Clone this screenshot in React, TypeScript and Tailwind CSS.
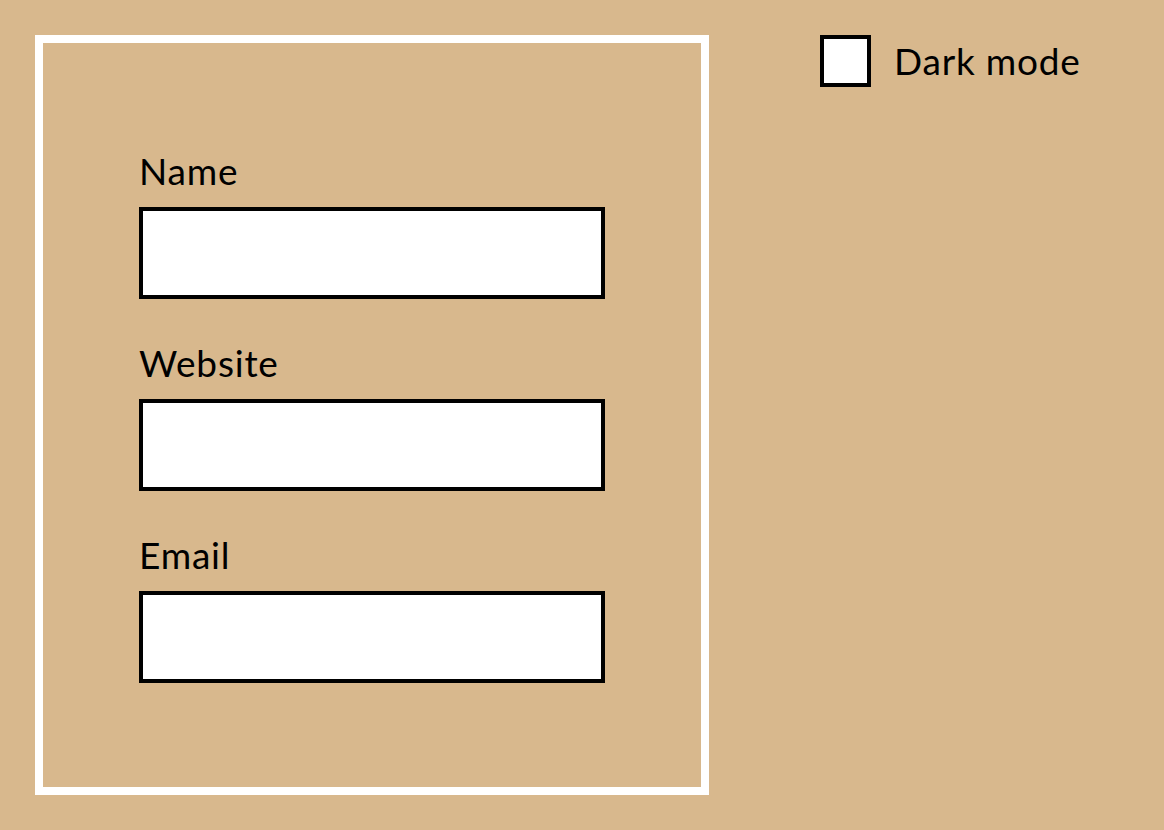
import React, { useState } from 'react';

const fields = ['Name', 'Website', 'Email'];

export default function App() {
  const [dark, setDark] = useState(false);

  return (
    <div
      className="flex h-[830px] w-full gap-[111px] bg-[#d8b88d] p-[35px] text-black"
      style={{ fontFamily: 'Lato, "Open Sans", sans-serif' }}
    >
      <form className="flex h-[760px] w-[674px] shrink-0 flex-col gap-[42px] border-8 border-white pl-[96px] pt-[106px]">
        {fields.map((label) => (
          <label key={label} className="flex flex-col gap-[14px]">
            <span className="text-[37px] leading-[44px] tracking-[0.8px]">{label}</span>
            <input
              type="text"
              className="h-[92px] w-[466px] border-4 border-black bg-white px-3 text-[28px] outline-none"
            />
          </label>
        ))}
      </form>

      <label className="flex h-[52px] items-center gap-[23px] self-start">
        <input
          type="checkbox"
          checked={dark}
          onChange={() => setDark(!dark)}
          className="h-[52px] w-[51px] appearance-none border-4 border-black bg-white"
        />
        <span className="text-[37px] leading-[44px] tracking-[0.8px]">Dark mode</span>
      </label>
    </div>
  );
}
